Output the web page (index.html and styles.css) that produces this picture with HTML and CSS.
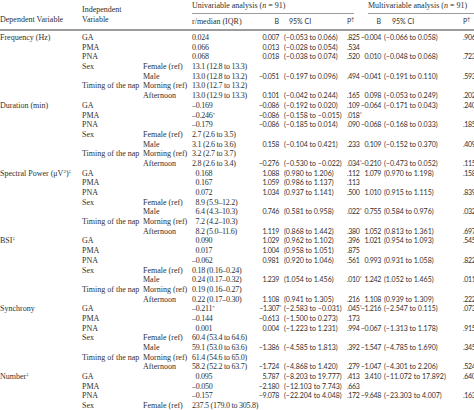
FILE: index.html
```html
<!DOCTYPE html>
<html lang="en">
<head>
<meta charset="utf-8">
<title>Univariable and multivariable analysis</title>
<link rel="stylesheet" href="styles.css">
</head>
<body>
<div class="cols head">
  <div class="stub s1">Dependent Variable</div>
  <div class="stub s2">Independent<br>Variable</div>
  <div class="grp uni"><span class="grp-in">Univariable analysis (<i>n</i> = 91)</span></div>
  <div class="grp multi"><span class="grp-in">Multivariable analysis (<i>n</i> = 91)</span></div>

  <div class="sub">r/median (IQR)</div>
  <div class="sub sans hb">B</div>
  <div class="sub sans hci">95% CI</div>
  <div class="sub sans hp">P<span class="fn">†</span></div>
  <div class="sub sans hb2">B</div>
  <div class="sub sans hci2">95% CI</div>
  <div class="sub sans hp2">P<span class="fn">†</span></div>
</div>
<div class="cols body">
  <div>Frequency (Hz)</div><div>GA</div><div></div><div class="m">0.024</div><div class="b">0.007</div><div class="ci">(–0.053 to 0.066)</div><div class="p">.825</div><div class="b2">–0.004</div><div class="ci2">(–0.066 to 0.058)</div><div class="p2">.906</div>
  <div></div><div>PMA</div><div></div><div class="m">0.066</div><div class="b">0.013</div><div class="ci">(–0.028 to 0.054)</div><div class="p">.534</div><div class="b2"></div><div class="ci2"></div><div class="p2"></div>
  <div></div><div>PNA</div><div></div><div class="m">0.068</div><div class="b">0.018</div><div class="ci">(–0.038 to 0.074)</div><div class="p">.520</div><div class="b2">0.010</div><div class="ci2">(–0.048 to 0.068)</div><div class="p2">.723</div>
  <div></div><div>Sex</div><div>Female (ref)</div><div class="m">13.1 (12.8 to 13.3)</div><div class="b"></div><div class="ci"></div><div class="p"></div><div class="b2"></div><div class="ci2"></div><div class="p2"></div>
  <div></div><div></div><div>Male</div><div class="m">13.0 (12.8 to 13.2)</div><div class="b">–0.051</div><div class="ci">(–0.197 to 0.096)</div><div class="p">.494</div><div class="b2">–0.041</div><div class="ci2">(–0.191 to 0.110)</div><div class="p2">.593</div>
  <div></div><div>Timing of the nap</div><div>Morning (ref)</div><div class="m">13.0 (12.7 to 13.2)</div><div class="b"></div><div class="ci"></div><div class="p"></div><div class="b2"></div><div class="ci2"></div><div class="p2"></div>
  <div></div><div></div><div>Afternoon</div><div class="m">13.0 (12.9 to 13.3)</div><div class="b">0.101</div><div class="ci">(–0.042 to 0.244)</div><div class="p">.165</div><div class="b2">0.098</div><div class="ci2">(–0.053 to 0.249)</div><div class="p2">.202</div>

  <div>Duration (min)</div><div>GA</div><div></div><div class="m">–0.169</div><div class="b">–0.086</div><div class="ci">(–0.192 to 0.020)</div><div class="p">.109</div><div class="b2">–0.064</div><div class="ci2">(–0.171 to 0.043)</div><div class="p2">.240</div>
  <div></div><div>PMA</div><div></div><div class="m">–0.246<span class="st">*</span></div><div class="b">–0.086</div><div class="ci">(–0.158 to –0.015)</div><div class="p">.018<span class="st">*</span></div><div class="b2"></div><div class="ci2"></div><div class="p2"></div>
  <div></div><div>PNA</div><div></div><div class="m">–0.179</div><div class="b">–0.086</div><div class="ci">(–0.185 to 0.014)</div><div class="p">.090</div><div class="b2">–0.068</div><div class="ci2">(–0.168 to 0.033)</div><div class="p2">.185</div>
  <div></div><div>Sex</div><div>Female (ref)</div><div class="m">2.7 (2.6 to 3.5)</div><div class="b"></div><div class="ci"></div><div class="p"></div><div class="b2"></div><div class="ci2"></div><div class="p2"></div>
  <div></div><div></div><div>Male</div><div class="m">3.1 (2.6 to 3.6)</div><div class="b">0.158</div><div class="ci">(–0.104 to 0.421)</div><div class="p">.233</div><div class="b2">0.109</div><div class="ci2">(–0.152 to 0.370)</div><div class="p2">.409</div>
  <div></div><div>Timing of the nap</div><div>Morning (ref)</div><div class="m">3.2 (2.7 to 3.7)</div><div class="b"></div><div class="ci"></div><div class="p"></div><div class="b2"></div><div class="ci2"></div><div class="p2"></div>
  <div></div><div></div><div>Afternoon</div><div class="m">2.8 (2.6 to 3.4)</div><div class="b">–0.276</div><div class="ci">(–0.530 to –0.022)</div><div class="p">.034<span class="st">*</span></div><div class="b2">–0.210</div><div class="ci2">(–0.473 to 0.052)</div><div class="p2">.115</div>

  <div>Spectral Power (μV<span class="fn">2</span>)<span class="fn">‡</span></div><div>GA</div><div></div><div class="m in">0.168</div><div class="b">1.088</div><div class="ci">(0.980 to 1.206)</div><div class="p">.112</div><div class="b2">1.079</div><div class="ci2">(0.970 to 1.198)</div><div class="p2">.158</div>
  <div></div><div>PMA</div><div></div><div class="m in">0.167</div><div class="b">1.059</div><div class="ci">(0.986 to 1.137)</div><div class="p">.113</div><div class="b2"></div><div class="ci2"></div><div class="p2"></div>
  <div></div><div>PNA</div><div></div><div class="m in">0.072</div><div class="b">1.034</div><div class="ci">(0.937 to 1.141)</div><div class="p">.500</div><div class="b2">1.010</div><div class="ci2">(0.915 to 1.115)</div><div class="p2">.839</div>
  <div></div><div>Sex</div><div>Female (ref)</div><div class="m in">8.9 (5.9–12.2)</div><div class="b"></div><div class="ci"></div><div class="p"></div><div class="b2"></div><div class="ci2"></div><div class="p2"></div>
  <div></div><div></div><div>Male</div><div class="m in">6.4 (4.3–10.3)</div><div class="b">0.746</div><div class="ci">(0.581 to 0.958)</div><div class="p">.022<span class="st">*</span></div><div class="b2">0.755</div><div class="ci2">(0.584 to 0.976)</div><div class="p2">.032<span class="st">*</span></div>
  <div></div><div>Timing of the nap</div><div>Morning (ref)</div><div class="m in">7.2 (4.2–10.3)</div><div class="b"></div><div class="ci"></div><div class="p"></div><div class="b2"></div><div class="ci2"></div><div class="p2"></div>
  <div></div><div></div><div>Afternoon</div><div class="m in">8.2 (5.0–11.6)</div><div class="b">1.119</div><div class="ci">(0.868 to 1.442)</div><div class="p">.380</div><div class="b2">1.052</div><div class="ci2">(0.813 to 1.361)</div><div class="p2">.697</div>

  <div>BSI<span class="fn">‡</span></div><div>GA</div><div></div><div class="m in">0.090</div><div class="b">1.029</div><div class="ci">(0.962 to 1.102)</div><div class="p">.396</div><div class="b2">1.021</div><div class="ci2">(0.954 to 1.093)</div><div class="p2">.545</div>
  <div></div><div>PMA</div><div></div><div class="m in">0.017</div><div class="b">1.004</div><div class="ci">(0.958 to 1.051)</div><div class="p">.875</div><div class="b2"></div><div class="ci2"></div><div class="p2"></div>
  <div></div><div>PNA</div><div></div><div class="m">–0.062</div><div class="b">0.981</div><div class="ci">(0.920 to 1.046)</div><div class="p">.561</div><div class="b2">0.993</div><div class="ci2">(0.931 to 1.058)</div><div class="p2">.822</div>
  <div></div><div>Sex</div><div>Female (ref)</div><div class="m">0.18 (0.16–0.24)</div><div class="b"></div><div class="ci"></div><div class="p"></div><div class="b2"></div><div class="ci2"></div><div class="p2"></div>
  <div></div><div></div><div>Male</div><div class="m">0.24 (0.17–0.32)</div><div class="b">1.239</div><div class="ci">(1.054 to 1.456)</div><div class="p">.010<span class="st">*</span></div><div class="b2">1.242</div><div class="ci2">(1.052 to 1.465)</div><div class="p2">.011<span class="st">*</span></div>
  <div></div><div>Timing of the nap</div><div>Morning (ref)</div><div class="m">0.19 (0.16–0.27)</div><div class="b"></div><div class="ci"></div><div class="p"></div><div class="b2"></div><div class="ci2"></div><div class="p2"></div>
  <div></div><div></div><div>Afternoon</div><div class="m">0.22 (0.17–0.30)</div><div class="b">1.108</div><div class="ci">(0.941 to 1.305)</div><div class="p">.216</div><div class="b2">1.108</div><div class="ci2">(0.939 to 1.309)</div><div class="p2">.222</div>

  <div>Synchrony</div><div>GA</div><div></div><div class="m">–0.211<span class="st">*</span></div><div class="b">–1.307<span class="st hang">*</span></div><div class="ci">(–2.583 to –0.031)</div><div class="p">.045<span class="st">*</span></div><div class="b2">–1.216</div><div class="ci2">(–2.547 to 0.115)</div><div class="p2">.073</div>
  <div></div><div>PMA</div><div></div><div class="m">–0.144</div><div class="b">–0.613</div><div class="ci">(–1.500 to 0.273)</div><div class="p">.173</div><div class="b2"></div><div class="ci2"></div><div class="p2"></div>
  <div></div><div>PNA</div><div></div><div class="m in">0.001</div><div class="b">0.004</div><div class="ci">(–1.223 to 1.231)</div><div class="p">.994</div><div class="b2">–0.067</div><div class="ci2">(–1.313 to 1.178)</div><div class="p2">.915</div>
  <div></div><div>Sex</div><div>Female (ref)</div><div class="m">60.4 (53.4 to 64.6)</div><div class="b"></div><div class="ci"></div><div class="p"></div><div class="b2"></div><div class="ci2"></div><div class="p2"></div>
  <div></div><div></div><div>Male</div><div class="m">59.1 (53.0 to 63.6)</div><div class="b">–1.386</div><div class="ci">(–4.585 to 1.813)</div><div class="p">.392</div><div class="b2">–1.547</div><div class="ci2">(–4.785 to 1.690)</div><div class="p2">.345</div>
  <div></div><div>Timing of the nap</div><div>Morning (ref)</div><div class="m">61.4 (54.6 to 65.0)</div><div class="b"></div><div class="ci"></div><div class="p"></div><div class="b2"></div><div class="ci2"></div><div class="p2"></div>
  <div></div><div></div><div>Afternoon</div><div class="m">58.2 (52.2 to 63.7)</div><div class="b">–1.724</div><div class="ci">(–4.868 to 1.420)</div><div class="p">.279</div><div class="b2">–1.047</div><div class="ci2">(–4.301 to 2.206)</div><div class="p2">.524</div>

  <div>Number<span class="fn">‡</span></div><div>GA</div><div></div><div class="m in">0.095</div><div class="b">5.787</div><div class="ci">(–8.203 to 19.777)</div><div class="p">.413</div><div class="b2">3.410</div><div class="ci2">(–11.072 to 17.892)</div><div class="p2">.640</div>
  <div></div><div>PMA</div><div></div><div class="m">–0.050</div><div class="b">–2.180</div><div class="ci">(–12.103 to 7.743)</div><div class="p">.663</div><div class="b2"></div><div class="ci2"></div><div class="p2"></div>
  <div></div><div>PNA</div><div></div><div class="m">–0.157</div><div class="b">–9.078</div><div class="ci">(–22.204 to 4.048)</div><div class="p">.172</div><div class="b2">–9.648</div><div class="ci2">(–23.303 to 4.007)</div><div class="p2">.163</div>
  <div></div><div>Sex</div><div>Female (ref)</div><div class="m">237.5 (179.0 to 305.8)</div><div class="b"></div><div class="ci"></div><div class="p"></div><div class="b2"></div><div class="ci2"></div><div class="p2"></div>
</div>
</body>
</html>
```
FILE: styles.css
```css
html, body {
  margin: 0;
  padding: 0;
  background: #ffffff;
  overflow: hidden;
}

body {
  font-family: "Liberation Serif", "Times New Roman", serif;
  font-size: 8px;
  color: #303030;
}

.cols {
  display: grid;
  grid-template-columns: 82px 61px 49px 58px 30px 67px 13px 22px 81px 31px;
  width: 494px;
}

.head {
  grid-template-rows: 14px 17px;
}

.body {
  grid-auto-rows: 9.7px;
  padding-top: 2px;
}

.cols > div {
  white-space: nowrap;
  line-height: 9.7px;
  min-width: 0;
}

.head > .stub {
  grid-row: 1 / 3;
  display: flex;
  flex-direction: column;
  justify-content: flex-end;
  line-height: 10px;
  padding-bottom: 4px;
  border-bottom: 2px solid #9c9c9c;
}

.head > .s2 { grid-column: 2 / 4; }

.head > .grp {
  line-height: 10px;
  padding-top: 1px;
}

.uni { grid-column: 4 / 8; }
.multi { grid-column: 8 / 11; }

.grp-in {
  display: block;
  padding-bottom: 2px;
  border-bottom: 1px solid #9c9c9c;
}

.uni .grp-in { margin-right: 6px; }
.multi .grp-in { margin-left: 8px; }

.head > .sub {
  line-height: 15px;
  border-bottom: 2px solid #9c9c9c;
}

.sans,
.b, .ci, .p, .b2, .ci2, .p2 {
  font-family: Lato, "Liberation Sans", sans-serif;
  font-size: 7px;
}

.b, .p, .b2, .p2 {
  letter-spacing: -0.3px;
}

.head > .hb, .head > .hb2 { text-align: right; padding-right: 1px; }
.head > .hci { padding-left: 9px; }
.head > .hci2 { padding-left: 10px; }

.body > .m { letter-spacing: -0.25px; }
.body > .m.in { padding-left: 3.5px; }

.body > .b, .body > .b2 {
  text-align: right;
  padding-right: 1px;
}

.body > .ci { padding-left: 4px; }
.body > .ci2 { padding-left: 2px; }

.st {
  font-size: 5px;
  line-height: 0;
  vertical-align: 2.5px;
  letter-spacing: 0;
}

.st.hang { margin-right: -2.5px; }

.fn {
  font-size: 5px;
  line-height: 0;
  vertical-align: 3px;
}
```
